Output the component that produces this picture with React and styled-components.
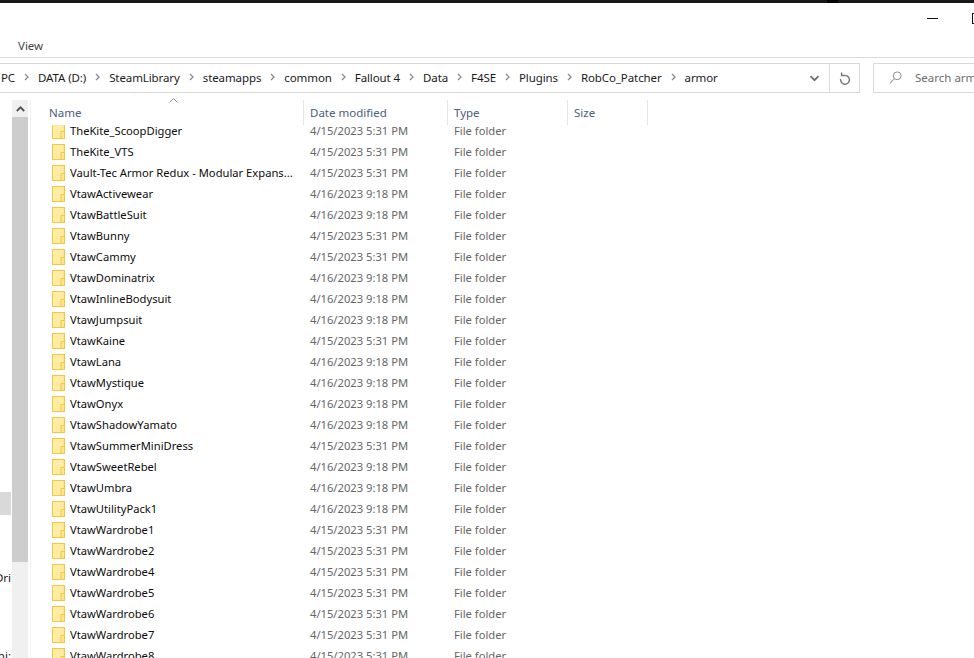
import React from 'react';
import styled, { createGlobalStyle } from 'styled-components';

const GlobalStyle = createGlobalStyle`
  html, body {
    margin: 0;
    height: 100%;
    overflow: hidden;
    background: #fff;
  }
  #root {
    height: 100%;
  }
`;

const crumbs = ['PC', 'DATA (D:)', 'SteamLibrary', 'steamapps', 'common', 'Fallout 4', 'Data', 'F4SE', 'Plugins', 'RobCo_Patcher', 'armor'];

const folders = [
  ['TheKite_ScoopDigger', '4/15/2023 5:31 PM'],
  ['TheKite_VTS', '4/15/2023 5:31 PM'],
  ['Vault-Tec Armor Redux - Modular Expans...', '4/15/2023 5:31 PM'],
  ['VtawActivewear', '4/16/2023 9:18 PM'],
  ['VtawBattleSuit', '4/16/2023 9:18 PM'],
  ['VtawBunny', '4/15/2023 5:31 PM'],
  ['VtawCammy', '4/15/2023 5:31 PM'],
  ['VtawDominatrix', '4/16/2023 9:18 PM'],
  ['VtawInlineBodysuit', '4/16/2023 9:18 PM'],
  ['VtawJumpsuit', '4/16/2023 9:18 PM'],
  ['VtawKaine', '4/15/2023 5:31 PM'],
  ['VtawLana', '4/16/2023 9:18 PM'],
  ['VtawMystique', '4/16/2023 9:18 PM'],
  ['VtawOnyx', '4/16/2023 9:18 PM'],
  ['VtawShadowYamato', '4/16/2023 9:18 PM'],
  ['VtawSummerMiniDress', '4/15/2023 5:31 PM'],
  ['VtawSweetRebel', '4/16/2023 9:18 PM'],
  ['VtawUmbra', '4/16/2023 9:18 PM'],
  ['VtawUtilityPack1', '4/16/2023 9:18 PM'],
  ['VtawWardrobe1', '4/15/2023 5:31 PM'],
  ['VtawWardrobe2', '4/15/2023 5:31 PM'],
  ['VtawWardrobe4', '4/15/2023 5:31 PM'],
  ['VtawWardrobe5', '4/15/2023 5:31 PM'],
  ['VtawWardrobe6', '4/15/2023 5:31 PM'],
  ['VtawWardrobe7', '4/15/2023 5:31 PM'],
  ['VtawWardrobe8', '4/15/2023 5:31 PM'],
];

const FolderIcon = () => (
  <svg width="13" height="16" viewBox="0 0 13 16" style={{ flex: 'none' }}>
    <rect x="0.5" y="0.5" width="12" height="15" fill="#fde68f" stroke="#f0c844" />
    <path d="M1 1h10v7H8.5v7H1z" fill="#fff0b4" opacity="0.55" />
    <path d="M9 15V8.5H12.5" fill="none" stroke="#f0c844" />
  </svg>
);

const Chevron = () => (
  <svg width="5" height="8" viewBox="0 0 5 8" style={{ flex: 'none' }}>
    <path d="M1 1l3 3-3 3" fill="none" stroke="#8a8a8a" strokeWidth="1.3" />
  </svg>
);

const App = () => (
  <Window>
    <GlobalStyle />
    <BlackBar>
      <BarNotch />
    </BlackBar>
    <TitleBar>
      <MinimizeGlyph />
      <MaximizeGlyph />
    </TitleBar>
    <MenuBar>
      <MenuItem>View</MenuItem>
    </MenuBar>
    <AddressRow>
      <AddressBox>
        <Breadcrumbs>
          {crumbs.map((crumb, idx) => (
            <React.Fragment key={crumb}>
              {idx > 0 && <Chevron />}
              <Crumb>{crumb}</Crumb>
            </React.Fragment>
          ))}
        </Breadcrumbs>
        <DropButton>
          <svg width="11" height="7" viewBox="0 0 11 7">
            <path d="M1.5 1.2l4 4 4-4" fill="none" stroke="#6d6d6d" strokeWidth="1.7" />
          </svg>
        </DropButton>
        <RefreshButton>
          <svg width="12" height="13" viewBox="0 0 12 13">
            <path d="M6.2 3.4A4.4 4.4 0 1 1 1.7 7" fill="none" stroke="#7a7a7a" strokeWidth="1.5" />
            <path d="M2.6 0.6V3.6H6.2" fill="none" stroke="#7a7a7a" strokeWidth="1.5" />
          </svg>
        </RefreshButton>
      </AddressBox>
      <SearchBox>
        <svg width="13" height="13" viewBox="0 0 13 13" style={{ flex: 'none' }}>
          <circle cx="8.2" cy="4.8" r="3.9" fill="none" stroke="#8d8d8d" />
          <path d="M5.4 7.6L0.8 12.3" fill="none" stroke="#b49a8c" strokeWidth="1.1" />
        </svg>
        <SearchText>Search armor</SearchText>
      </SearchBox>
    </AddressRow>
    <Body>
      <NavPane>
        <NavRow $selected />
        <NavRow $gap={51}>
          <NavLabel>Dri</NavLabel>
        </NavRow>
        <NavRow $gap={55}>
          <NavLabel>ni:</NavLabel>
        </NavRow>
      </NavPane>
      <NavScroll>
        <ScrollUp>
          <svg width="9" height="6" viewBox="0 0 9 6">
            <path d="M0.8 5L4.5 1.3 8.2 5" fill="none" stroke="#505050" strokeWidth="1.8" />
          </svg>
        </ScrollUp>
        <ScrollThumb />
      </NavScroll>
      <FileArea>
        <HeaderRow>
          <SortCaret>
            <svg width="9" height="5" viewBox="0 0 9 5">
              <path d="M0.5 4.5l4-4 4 4" fill="none" stroke="#8f8f8f" />
            </svg>
          </SortCaret>
          <HeaderCell $width={273} $pad={18}>Name</HeaderCell>
          <HeaderCell $width={144}>Date modified</HeaderCell>
          <HeaderCell $width={120}>Type</HeaderCell>
          <HeaderCell $width={80}>Size</HeaderCell>
        </HeaderRow>
        <RowScroller>
          {folders.map(([name, date]) => (
            <Row key={name}>
              <NameCell>
                <FolderIcon />
                <FileName>{name}</FileName>
              </NameCell>
              <DateCell>{date}</DateCell>
              <TypeCell>File folder</TypeCell>
            </Row>
          ))}
        </RowScroller>
      </FileArea>
    </Body>
  </Window>
);

// === Window chrome ===

const Window = styled.div`
  display: flex;
  flex-direction: column;
  height: 658px;
  overflow: hidden;
  background: #fff;
  font-family: "Noto Sans", "Open Sans", sans-serif;
  font-size: 12px;
`;

const BlackBar = styled.div`
  flex: none;
  height: 3px;
  background: #171717;
  position: relative;
`;

const BarNotch = styled.div`
  position: absolute;
  left: 827px;
  width: 11px;
  top: 0;
  bottom: 0;
  background: #050505;
`;

const TitleBar = styled.div`
  flex: none;
  height: 32px;
  box-sizing: border-box;
  padding-bottom: 2px;
  display: flex;
  align-items: center;
  justify-content: flex-end;
  margin-right: -10px;
  gap: 34px;
`;

const MinimizeGlyph = styled.div`
  width: 11px;
  height: 1px;
  background: #111;
`;

const MaximizeGlyph = styled.div`
  width: 10px;
  height: 9px;
  border: 1px solid #111;
`;

const MenuBar = styled.div`
  flex: none;
  height: 20px;
  padding: 0 0 2px 18px;
  display: flex;
  align-items: center;
  border-bottom: 1px solid #d9d9d9;
`;

const MenuItem = styled.span`
  color: #444;
  font-size: 11.5px;
`;

const AddressRow = styled.div`
  flex: none;
  display: flex;
  gap: 13px;
  height: 30px;
  margin-top: 5px;
  margin-left: -1px;
`;

const AddressBox = styled.div`
  width: 861px;
  flex: none;
  display: flex;
  align-items: stretch;
  box-sizing: border-box;
  border: 1px solid #d9d9d9;
  border-left: none;
`;

const Breadcrumbs = styled.div`
  flex: 1;
  display: flex;
  align-items: center;
  gap: 9px;
  padding: 0 0 2px 2px;
  white-space: nowrap;
  overflow: hidden;
`;

const Crumb = styled.span`
  color: #1a1a1a;
  font-size: 11.5px;
  letter-spacing: -0.1px;
`;

const DropButton = styled.div`
  width: 29px;
  display: flex;
  align-items: center;
  justify-content: center;
`;

const RefreshButton = styled.div`
  width: 29px;
  display: flex;
  align-items: center;
  justify-content: center;
  border-left: 1px solid #d9d9d9;
`;

const SearchBox = styled.div`
  flex: none;
  width: 200px;
  box-sizing: border-box;
  display: flex;
  align-items: center;
  gap: 13px;
  padding: 0 0 2px 15px;
  border: 1px solid #d9d9d9;
`;

const SearchText = styled.span`
  color: #6d6d6d;
  font-size: 11.5px;
  white-space: nowrap;
`;

// === Navigation pane ===

const Body = styled.div`
  flex: 1;
  min-height: 0;
  display: flex;
  margin-top: 7px;
`;

const NavPane = styled.div`
  flex: none;
  width: 11px;
  margin-right: 1px;
  padding-top: 392px;
  overflow: hidden;
`;

const NavRow = styled.div`
  height: 23px;
  margin-top: ${props => props.$gap || 0}px;
  background: ${props => (props.$selected ? '#d9d9d9' : 'transparent')};
  display: flex;
  align-items: center;
  justify-content: flex-end;
  white-space: nowrap;
`;

const NavLabel = styled.span`
  color: #1a1a1a;
  font-size: 11.5px;
`;

const NavScroll = styled.div`
  flex: none;
  width: 16px;
  display: flex;
  flex-direction: column;
  background: #f0f0f0;
  margin-right: 2px;
`;

const ScrollUp = styled.div`
  height: 17px;
  display: flex;
  align-items: center;
  justify-content: center;
`;

const ScrollThumb = styled.div`
  height: 445px;
  background: #cdcdcd;
`;

// === File list ===

const FileArea = styled.div`
  flex: 1;
  min-width: 0;
  display: flex;
  flex-direction: column;
  border-left: 1px solid #f2f2f2;
`;

const HeaderRow = styled.div`
  flex: none;
  height: 25px;
  display: flex;
  position: relative;
  z-index: 1;
  background: #fff;
`;

const SortCaret = styled.div`
  position: absolute;
  left: 138px;
  top: -2px;
  line-height: 0;
`;

const HeaderCell = styled.div`
  flex: none;
  box-sizing: border-box;
  width: ${props => props.$width}px;
  padding: 5px 0 0 ${props => props.$pad || 6}px;
  color: #4c607a;
  font-size: 11.5px;
  border-right: 1px solid #e5e5e5;
`;

const RowScroller = styled.div`
  flex: 1;
  min-height: 0;
  overflow: hidden;
`;

const Row = styled.div`
  height: 21px;
  display: flex;
  align-items: center;
  &:first-child {
    margin-top: -5px;
  }
`;

const NameCell = styled.div`
  flex: none;
  width: 273px;
  box-sizing: border-box;
  padding-left: 21px;
  display: flex;
  align-items: center;
  gap: 5px;
`;

const FileName = styled.span`
  color: #0c0c0c;
  font-size: 11.2px;
  white-space: nowrap;
`;

const DateCell = styled.div`
  flex: none;
  width: 144px;
  box-sizing: border-box;
  padding-left: 6px;
  color: #666;
  font-size: 11.2px;
`;

const TypeCell = styled.div`
  flex: none;
  width: 120px;
  box-sizing: border-box;
  padding-left: 6px;
  color: #666;
  font-size: 11.2px;
`;

export default App;
